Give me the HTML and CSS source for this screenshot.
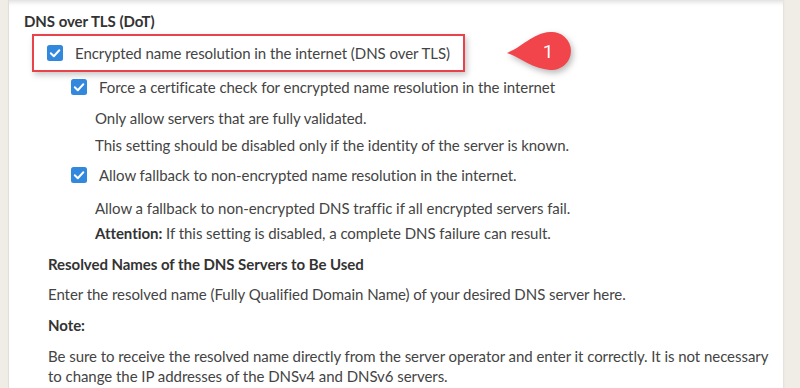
FILE: index.html
```html
<!DOCTYPE html>
<html lang="en">
<head>
<meta charset="utf-8">
<title>DNS over TLS (DoT)</title>
<link rel="stylesheet" href="styles.css">
</head>
<body>
<div class="page">
  <section class="panel">
    <h2 class="title">DNS over TLS (DoT)</h2>

    <label class="option option-main">
      <span class="box"><svg viewBox="0 0 16 16" width="16" height="16"><path d="M3.8 8.3 L6.8 11.2 L12.3 5.2" fill="none" stroke="#fff" stroke-width="2" stroke-linecap="round" stroke-linejoin="round"/></svg></span>
      <span class="label">Encrypted name resolution in the internet (DNS over TLS)</span>
    </label>

    <label class="option option-sub">
      <span class="box"><svg viewBox="0 0 16 16" width="16" height="16"><path d="M3.8 8.3 L6.8 11.2 L12.3 5.2" fill="none" stroke="#fff" stroke-width="2" stroke-linecap="round" stroke-linejoin="round"/></svg></span>
      <span class="label">Force a certificate check for encrypted name resolution in the internet</span>
    </label>
    <p class="hint hint-first">Only allow servers that are fully validated.</p>
    <p class="hint hint-next">This setting should be disabled only if the identity of the server is known.</p>

    <label class="option option-sub option-third">
      <span class="box"><svg viewBox="0 0 16 16" width="16" height="16"><path d="M3.8 8.3 L6.8 11.2 L12.3 5.2" fill="none" stroke="#fff" stroke-width="2" stroke-linecap="round" stroke-linejoin="round"/></svg></span>
      <span class="label">Allow fallback to non-encrypted name resolution in the internet.</span>
    </label>
    <p class="hint hint-first2">Allow a fallback to non-encrypted DNS traffic if all encrypted servers fail.</p>
    <p class="hint hint-next2"><strong>Attention:</strong> If this setting is disabled, a complete DNS failure can result.</p>

    <h3 class="subhead">Resolved Names of the DNS Servers to Be Used</h3>
    <p class="text">Enter the resolved name (Fully Qualified Domain Name) of your desired DNS server here.</p>
    <h3 class="subhead note">Note:</h3>
    <p class="text">Be sure to receive the resolved name directly from the server operator and enter it correctly. It is not necessary to change the IP addresses of the DNSv4 and DNSv6 servers.</p>

    <div class="callout">
      <svg viewBox="0 0 72 46" width="72" height="46">
        <path d="M2 23 C16 18 28 3 45 2.1 A19 19 0 1 1 45 39.9 C28 39 16 28 2 23 Z" fill="#f2444b"/>
        <text x="43" y="28" text-anchor="middle" class="callout-num">1</text>
      </svg>
    </div>
  </section>
</div>
</body>
</html>
```

FILE: styles.css
```css
html, body {
  margin: 0;
  padding: 0;
  background: #f0ece6;
}

body {
  font-family: Lato, "Noto Sans", sans-serif;
  font-size: 15px;
  line-height: 20px;
  letter-spacing: -0.05px;
  color: #444;
  overflow: hidden;
}

.page {
  padding: 0 17px 0 8px;
  height: 388px;
}

.panel {
  position: relative;
  background: #fff;
  border-left: 1px solid #e2ded8;
  height: 388px;
  box-sizing: border-box;
  padding: 11px 9px 0 15px;
  box-shadow: inset 0 6px 5px -4px rgba(0, 0, 0, 0.14), 1px 0 2px rgba(0, 0, 0, 0.06);
}

.title {
  margin: 0;
  font-size: 15px;
  line-height: 20px;
  font-weight: 700;
  color: #333;
}

.option {
  display: flex;
  align-items: center;
  height: 20px;
}

.box {
  flex: none;
  width: 16px;
  height: 16px;
  border-radius: 2.5px;
  background: #3288dc;
  display: block;
}

.box svg {
  display: block;
}

.label {
  margin-left: 12px;
  white-space: nowrap;
}

.option-main {
  margin: 3px 0 0 8px;
  width: fit-content;
  padding: 7px 13px 7px 13px;
  border: 2px solid #e8424a;
  box-shadow: 2px 3px 6px rgba(0, 0, 0, 0.22);
}

.option-sub {
  margin: 5px 0 0 47px;
}

.option-third {
  margin-top: 10px;
}

.hint {
  margin: 0 0 0 71px;
  white-space: nowrap;
}

.hint-first { margin-top: 11px; }
.hint-next { margin-top: 7px; }
.hint-first2 { margin-top: 13px; }
.hint-next2 { margin-top: 5px; }

.hint strong {
  font-weight: 700;
  color: #333;
}

.subhead {
  margin: 11px 0 0 24px;
  font-size: 15px;
  line-height: 20px;
  font-weight: 700;
  color: #333;
}

.text {
  margin: 10px 0 0 24px;
}

.note {
  margin-top: 11px;
}

.note + .text {
  margin-top: 11px;
}

.callout {
  position: absolute;
  left: 496px;
  top: 30px;
  filter: drop-shadow(2px 3px 3px rgba(0, 0, 0, 0.28));
}

.callout svg {
  display: block;
}

.callout-num {
  font-family: Roboto, "Liberation Sans", sans-serif;
  font-size: 19px;
  fill: #fff;
}
```
